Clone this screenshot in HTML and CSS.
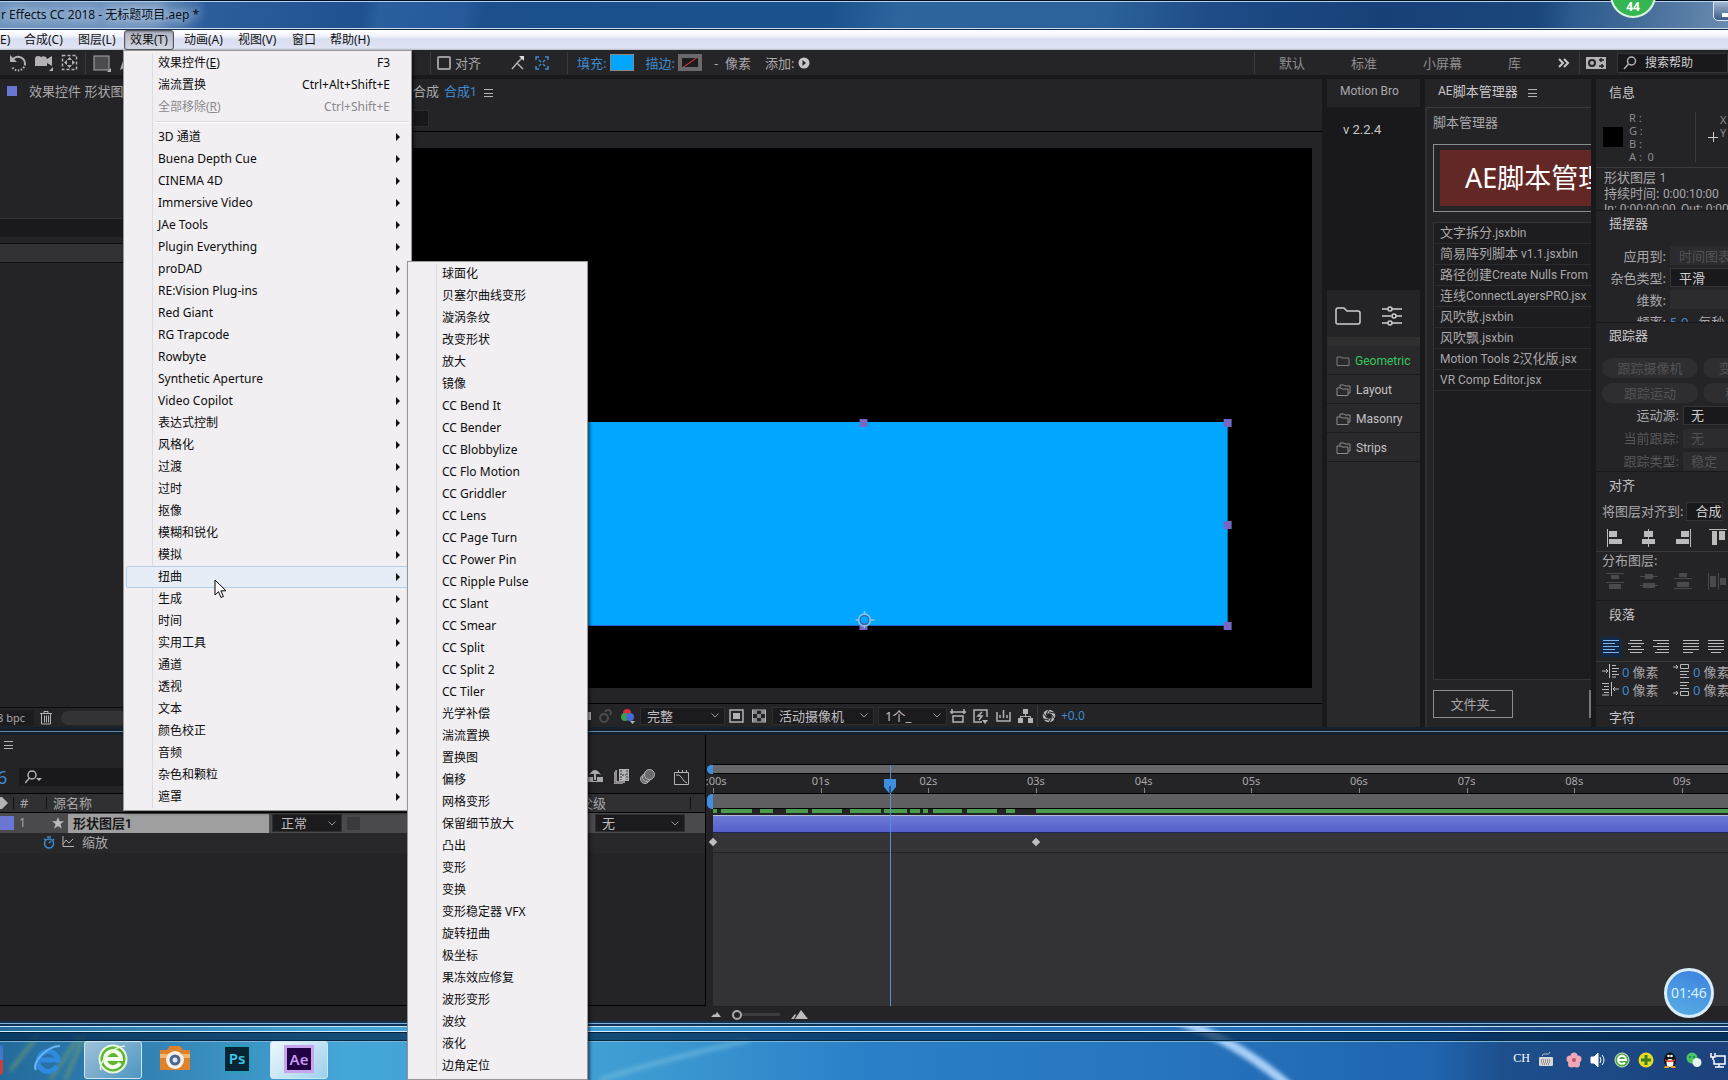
FILE: index.html
```html
<!DOCTYPE html>
<html lang="zh-CN">
<head>
<meta charset="utf-8">
<title>Adobe After Effects CC 2018 - 无标题项目.aep *</title>
<link rel="stylesheet" href="styles.css">
</head>
<body>
<div class="desktop">
<header class="titlebar">
  <h1 class="title-text">r Effects CC 2018 - 无标题项目.aep *</h1>
  <div class="score">44</div>
  <button class="minimize" aria-label="最小化"><span class="min-bar"></span></button>
</header>

<nav class="menubar">
  <button class="menu-head first">E)</button>
  <button class="menu-head">合成(C)</button>
  <button class="menu-head">图层(L)</button>
  <div class="menu-anchor">
    <button class="menu-head open">效果(T)</button>
    <div class="menu effects">
      <button class="mi">效果控件(<u>E</u>)<span class="key">F3</span></button>
      <button class="mi">湍流置换<span class="key">Ctrl+Alt+Shift+E</span></button>
      <button class="mi off" disabled>全部移除(<u>R</u>)<span class="key">Ctrl+Shift+E</span></button>
      <hr class="sep">
      <button class="mi sub">3D 通道</button>
      <button class="mi sub">Buena Depth Cue</button>
      <button class="mi sub">CINEMA 4D</button>
      <button class="mi sub">Immersive Video</button>
      <button class="mi sub">JAe Tools</button>
      <button class="mi sub">Plugin Everything</button>
      <button class="mi sub">proDAD</button>
      <button class="mi sub">RE:Vision Plug-ins</button>
      <button class="mi sub">Red Giant</button>
      <button class="mi sub">RG Trapcode</button>
      <button class="mi sub">Rowbyte</button>
      <button class="mi sub">Synthetic Aperture</button>
      <button class="mi sub">Video Copilot</button>
      <button class="mi sub">表达式控制</button>
      <button class="mi sub">风格化</button>
      <button class="mi sub">过渡</button>
      <button class="mi sub">过时</button>
      <button class="mi sub">抠像</button>
      <button class="mi sub">模糊和锐化</button>
      <button class="mi sub">模拟</button>
      <button class="mi sub hot">扭曲</button>
      <button class="mi sub">生成</button>
      <button class="mi sub">时间</button>
      <button class="mi sub">实用工具</button>
      <button class="mi sub">通道</button>
      <button class="mi sub">透视</button>
      <button class="mi sub">文本</button>
      <button class="mi sub">颜色校正</button>
      <button class="mi sub">音频</button>
      <button class="mi sub">杂色和颗粒</button>
      <button class="mi sub">遮罩</button>
      <div class="menu distort">
        <button class="mi">球面化</button>
        <button class="mi">贝塞尔曲线变形</button>
        <button class="mi">漩涡条纹</button>
        <button class="mi">改变形状</button>
        <button class="mi">放大</button>
        <button class="mi">镜像</button>
        <button class="mi">CC Bend It</button>
        <button class="mi">CC Bender</button>
        <button class="mi">CC Blobbylize</button>
        <button class="mi">CC Flo Motion</button>
        <button class="mi">CC Griddler</button>
        <button class="mi">CC Lens</button>
        <button class="mi">CC Page Turn</button>
        <button class="mi">CC Power Pin</button>
        <button class="mi">CC Ripple Pulse</button>
        <button class="mi">CC Slant</button>
        <button class="mi">CC Smear</button>
        <button class="mi">CC Split</button>
        <button class="mi">CC Split 2</button>
        <button class="mi">CC Tiler</button>
        <button class="mi">光学补偿</button>
        <button class="mi">湍流置换</button>
        <button class="mi">置换图</button>
        <button class="mi">偏移</button>
        <button class="mi">网格变形</button>
        <button class="mi">保留细节放大</button>
        <button class="mi">凸出</button>
        <button class="mi">变形</button>
        <button class="mi">变换</button>
        <button class="mi">变形稳定器 VFX</button>
        <button class="mi">旋转扭曲</button>
        <button class="mi">极坐标</button>
        <button class="mi">果冻效应修复</button>
        <button class="mi">波形变形</button>
        <button class="mi">波纹</button>
        <button class="mi">液化</button>
        <button class="mi">边角定位</button>
      </div>
      <svg class="cursor" width="13" height="20" viewBox="0 0 13 20"><path d="M1 1v15l3.500-3.300 2.500 5.800 2.400-1-2.500-5.700H12z" fill="#fff" stroke="#000"/></svg>
    </div>
  </div>
  <button class="menu-head">动画(A)</button>
  <button class="menu-head">视图(V)</button>
  <button class="menu-head">窗口</button>
  <button class="menu-head">帮助(H)</button>
</nav>

<div class="toolbar">
  <div class="tools">
    <svg width="18" height="18" viewBox="0 0 18 18" fill="none" stroke="#b4b2b4" stroke-width="2"><path d="M4 5a7 7 0 0 1 12 5"/><path d="M16 10a7 7 0 0 1-13 3" stroke-dasharray="1.500 1.500"/><path d="M1 1v7h7z" fill="#b4b2b4" stroke="none"/></svg>
    <svg width="20" height="18" viewBox="0 0 20 18" fill="#b4b2b4"><path d="M1 5q0-3 3-3 2 0 3 1 5-2 6 2l5-3v10l-5-3v3H1z"/><path d="M19 13v4h-4z"/></svg>
    <svg width="17" height="17" viewBox="0 0 17 17" fill="none" stroke="#b4b2b4"><rect x="1.500" y="1.500" width="14" height="14" stroke-width="1.500" stroke-dasharray="3 2"/><path d="M8.500 3 11 6H6zM8.500 14 6 11h5zM3 8.500 6 6v5zM14 8.500 11 6v5z" fill="#b4b2b4" stroke="none"/></svg>
    <i class="vr"></i>
    <svg width="19" height="18" viewBox="0 0 19 18"><rect x="1" y="2" width="15" height="14" fill="#4c4b4d" stroke="#aaa"/><path d="M18 14v4h-4z" fill="#b4b2b4"/></svg>
    <svg width="14" height="18" viewBox="0 0 14 18" fill="#b4b2b4"><path d="M1 16 4 7l5-5 4 4-4 6z"/></svg>
  </div>
  <div class="shape-options">
    <i class="vr"></i>
    <label class="snap"><input type="checkbox" class="check">对齐</label>
    <svg width="14" height="16" viewBox="0 0 14 16" fill="none" stroke="#b4b2b4"><path d="M1 14l5-6 6 6M6 8l5-5" stroke-width="1.500"/><path d="M8 1h5v5z" fill="#ddd" stroke="none"/></svg>
    <svg class="mark" width="14" height="14" viewBox="0 0 14 14" fill="none" stroke="#3e8ad0"><path d="M1 4V1h3M10 1h3v3M13 10v3h-3M4 13H1v-3M4 4l2 2M10 4 8 6M4 10l2-2M10 10 8 8" stroke-width="1.500"/></svg>
    <i class="vr"></i>
    <span class="blue">填充:</span><button class="swatch fill" aria-label="填充颜色"></button>
    <span class="blue">描边:</span><button class="swatch stroke" aria-label="描边颜色"></button>
    <span class="px">- &nbsp;像素</span><span>添加:</span>
    <svg width="12" height="14" viewBox="0 0 12 14"><circle cx="6" cy="7" r="5.500" fill="#c8c6c8"/><path d="M4.500 4v6L8 7z" fill="#222"/></svg>
  </div>
  <div class="spaces">
    <i class="vr"></i>
    <button class="space">默认</button><button class="space">标准</button><button class="space">小屏幕</button><button class="space">库</button>
    <svg width="12" height="10" viewBox="0 0 12 10" fill="none" stroke="#c8c6c8" stroke-width="2"><path d="M1 1l4 4-4 4M6 1l4 4-4 4"/></svg>
    <i class="vr"></i>
    <svg width="20" height="12" viewBox="0 0 20 12"><path d="M0 0h20v12H0z" fill="#b4b2b4"/><circle cx="6" cy="6" r="3" fill="none" stroke="#222" stroke-width="2"/><path d="M13 3h5M13 9h5M15 1v4M16 7v4" stroke="#222" stroke-width="1.500"/></svg>
    <label class="help"><svg width="14" height="14" viewBox="0 0 14 14" fill="none" stroke="#b4b2b4" stroke-width="1.500"><circle cx="8.500" cy="5" r="4"/><path d="M5.500 8 1 13"/></svg><input type="text" placeholder="搜索帮助" aria-label="搜索帮助"></label>
  </div>
</div>

<main class="workspace">
  <section class="panel project">
    <div class="tab"><i class="chip"></i>效果控件 形状图层 1</div>
    <div class="fx-body"><div class="band-dark"></div><div class="band-light"></div></div>
    <div class="project-foot"><span class="bpc">8 bpc</span>
      <svg width="12" height="14" viewBox="0 0 12 14" fill="none" stroke="#b4b2b4"><path d="M0 2.500h12M4 2V.500h4V2M1.500 3v10h9V3M4.500 4.500v7M6.500 4.500v7M8.500 4.500v7"/></svg><i class="scroll"></i></div>
  </section>

  <section class="panel comp">
    <div class="tab comp-tab">合成 <span class="blue">合成<span class="lat">1</span></span><i class="burger"></i></div>
    <div class="crumbs"><i class="crumb"></i></div>
    <div class="viewer">
      <svg class="canvas" viewBox="0 0 906 540" preserveAspectRatio="none">
        <rect width="906" height="540" fill="#000"/>
        <rect x="87" y="274" width="734" height="204" fill="#00a6ff"/>
        <path d="M87 477.500h734" stroke="#2a62c4"/>
        <g fill="#7468c4"><path d="M450 271h8v8h-8zM817 271h8v8h-8zM817 373h8v8h-8zM817 474h8v8h-8zM450 475h8v7h-8z"/></g>
        <g fill="none" stroke="#8fc4e4" stroke-width="1.500"><circle cx="455" cy="472" r="4.500" stroke="#2f6aa4"/><circle cx="455" cy="472" r="6"/><path d="M455 463v4M455 477v3M446 472h4M460 472h5"/></g>
      </svg>
    </div>
    <div class="comp-foot">
      <i class="cam-end"></i>
      <svg width="14" height="16" viewBox="0 0 14 16" fill="none" stroke="#4c4b4e" stroke-width="2"><circle cx="5" cy="10" r="4"/><path d="M6 4c3-4 8-1 5 3"/></svg>
      <svg width="16" height="16" viewBox="0 0 16 16"><circle cx="7" cy="5" r="4" fill="#d8303a"/><circle cx="5" cy="9" r="4" fill="#3c9c4c"/><circle cx="10" cy="9" r="4" fill="#456ad8"/><path d="M10 13h5l-2.500 3z" fill="#bbb"/></svg>
      <select class="drop w85" aria-label="分辨率"><option>完整</option></select>
      <svg width="16" height="14" viewBox="0 0 16 14"><rect x="1" y="1" width="13" height="12" fill="none" stroke="#b4b2b4" stroke-width="1.500"/><rect x="4" y="4" width="7" height="6" fill="#b4b2b4"/></svg>
      <svg width="15" height="14" viewBox="0 0 15 14"><rect x=".5" y="1" width="13" height="12" fill="none" stroke="#b4b2b4"/><path d="M1 1h4v4H1zM9 1h4v4H9zM5 5h4v4H5zM1 9h4v4H1zM9 9h4v4H9z" fill="#8a898b"/></svg>
      <select class="drop w102" aria-label="摄像机"><option>活动摄像机</option></select>
      <select class="drop w69" aria-label="视图布局"><option>1个_</option></select>
      <svg width="16" height="14" viewBox="0 0 16 14" fill="none" stroke="#b4b2b4" stroke-width="1.500"><path d="M0 3h16M2 0v5M14 0v5M3 7h10v6H3z"/></svg>
      <svg width="16" height="16" viewBox="0 0 16 16" fill="none" stroke="#b4b2b4" stroke-width="1.500"><path d="M14 9V2H1v12h8M9 4 5 8h4l-3 4"/><path d="M9 12h6l-3 4z" fill="#b4b2b4" stroke="none"/></svg>
      <svg width="15" height="14" viewBox="0 0 15 14" fill="none" stroke="#b4b2b4" stroke-width="1.500"><path d="M1 3v9h13V3M4 6v3M7.500 1v8M11 6v3"/></svg>
      <svg width="15" height="14" viewBox="0 0 15 14" fill="#b4b2b4"><path d="M5 0h5v5H5zM0 9h5v5H0zM10 9h5v5h-5zM7 5h1v2h5v2h-1V8H3v1H2V7h5z"/></svg>
      <i class="vr"></i>
      <svg width="14" height="14" viewBox="0 0 14 14" fill="none" stroke="#b4b2b4"><circle cx="7" cy="7" r="4.500" stroke-width="3.500"/><path d="M7 0 4 6M13 4 7 3M13 10 9 5M7 14l3-6M1 10l6 1M1 4l4 5" stroke="#232325"/></svg>
      <span class="blue num">+0.0</span>
    </div>
  </section>

  <section class="panel motion">
    <div class="tab">Motion Bro</div>
    <div class="version">v 2.2.4</div>
    <div class="motion-tools">
      <svg width="26" height="20" viewBox="0 0 26 20" fill="none" stroke="#d0ced0" stroke-width="1.500"><path d="M1 17V4q0-2 2-2h6l3 3h11q2 0 2 2v9q0 2-2 2H3q-2 0-2-1z"/></svg>
      <svg width="20" height="20" viewBox="0 0 20 20" fill="none" stroke="#d0ced0" stroke-width="1.500"><path d="M0 3h6M10 3h10M0 10h9M14 10h6M0 17h6M10 17h10"/><circle cx="8" cy="3" r="2"/><circle cx="12" cy="10" r="2"/><circle cx="8" cy="17" r="2"/></svg>
    </div>
    <div class="folders">
      <button class="folder on"><svg width="14" height="12" viewBox="0 0 14 12" fill="none" stroke="#7c7b7e"><path d="M1 10V2h4l1 1h7v7.500H1z"/></svg>Geometric</button>
      <button class="folder"><svg width="15" height="12" viewBox="0 0 15 12" fill="none" stroke="#8c8b8e"><path d="M1 11V4h4l1 1h6v6.500H1zM4 4V1h4l1 1h5v7h-2"/></svg>Layout</button>
      <button class="folder"><svg width="15" height="12" viewBox="0 0 15 12" fill="none" stroke="#8c8b8e"><path d="M1 11V4h4l1 1h6v6.500H1zM4 4V1h4l1 1h5v7h-2"/></svg>Masonry</button>
      <button class="folder"><svg width="15" height="12" viewBox="0 0 15 12" fill="none" stroke="#8c8b8e"><path d="M1 11V4h4l1 1h6v6.500H1zM4 4V1h4l1 1h5v7h-2"/></svg>Strips</button>
    </div>
  </section>

  <section class="panel scripts">
    <div class="tab bright"><span class="lat">AE</span>脚本管理器<i class="burger"></i></div>
    <div class="scripts-body">
      <div class="script-title">脚本管理器</div>
      <div class="banner"><span>AE脚本管理器</span></div>
      <ul class="files">
        <li>文字拆分<span class="lat">.jsxbin</span></li>
        <li>简易阵列脚本<span class="lat"> v1.1.jsxbin</span></li>
        <li>路径创建<span class="lat">Create Nulls From Paths.jsx</span></li>
        <li>连线<span class="lat">ConnectLayersPRO.jsx</span></li>
        <li>风吹散<span class="lat">.jsxbin</span></li>
        <li>风吹飘<span class="lat">.jsxbin</span></li>
        <li><span class="lat">Motion Tools 2</span>汉化版<span class="lat">.jsx</span></li>
        <li><span class="lat">VR Comp Editor.jsx</span></li>
      </ul>
      <div class="script-foot"><button class="folder-btn">文件夹_</button><i class="next-btn"></i></div>
    </div>
  </section>

  <aside class="side">
    <section class="panel info">
      <div class="tab bright">信息</div>
      <div class="info-row"><i class="black"></i><div class="rgba"><span>R :</span><span>G :</span><span>B :</span><span>A : &nbsp;0</span></div>
        <i class="vline"></i><svg width="10" height="10" viewBox="0 0 10 10" stroke="#ccc"><path d="M0 5.500h10M5.500 0v10"/></svg><div class="xy"><span>X</span><span>Y</span></div></div>
      <div class="info-text"><div>形状图层 <span class="lat">1</span></div><div>持续时间: <span class="lat">0:00:10:00</span></div><div class="lat cut">In: 0:00:00:00, Out: 0:00:09:24</div></div>
    </section>
    <section class="panel wiggler">
      <div class="tab bright">摇摆器</div>
      <div class="form f1">
        <label for="w1">应用到:</label><select id="w1" class="box dim" disabled><option>时间图表</option></select>
        <label for="w2">杂色类型:</label><select id="w2" class="box"><option>平滑</option></select>
        <label for="w3">维数:</label><select id="w3" class="box dim" disabled><option></option></select>
        <label>频率:</label><span class="freq"><b>5.0</b> &nbsp; 每秒</span>
      </div>
    </section>
    <section class="panel tracker">
      <div class="tab bright">跟踪器</div>
      <div class="pills"><button disabled>跟踪摄像机</button><button disabled>变形稳定器</button><button disabled>跟踪运动</button><button disabled>稳定运动</button></div>
      <div class="form f2">
        <label for="t1">运动源:</label><select id="t1" class="box"><option>无</option></select>
        <label class="off" for="t2">当前跟踪:</label><select id="t2" class="box dim" disabled><option>无</option></select>
        <label class="off" for="t3">跟踪类型:</label><select id="t3" class="box dim" disabled><option>稳定</option></select>
      </div>
    </section>
    <section class="panel align">
      <div class="tab bright">对齐</div>
      <div class="align-to"><label for="a1">将图层对齐到:</label><select id="a1" class="box"><option>合成</option></select></div>
      <div class="icons lit">
        <svg width="16" height="18" viewBox="0 0 16 18" fill="#bbb"><path d="M0 0h1v18H0zM2 2h8v6H2zM2 10h13v5H2z"/></svg>
        <svg width="16" height="18" viewBox="0 0 16 18" fill="#bbb"><path d="M7 0h1v18H7zM3 2h9v6H3zM1 10h13v5H1z"/></svg>
        <svg width="16" height="18" viewBox="0 0 16 18" fill="#bbb"><path d="M15 0h1v18h-1zM6 2h8v6H6zM1 10h13v5H1z"/></svg>
        <svg width="18" height="18" viewBox="0 0 18 18" fill="#bbb"><path d="M0 0h18v1H0zM3 2h5v14H3zM10 2h6v9h-6z"/></svg>
      </div>
      <div class="dist">分布图层:</div>
      <div class="icons dark">
        <svg width="18" height="17" viewBox="0 0 18 17" fill="#4a494c"><path d="M0 0h18v1H0zM5 2h8v4H5zM0 9h18v1H0zM3 11h12v5H3z"/></svg>
        <svg width="18" height="17" viewBox="0 0 18 17" fill="#4a494c"><path d="M0 3h18v1H0zM5 1h8v5H5zM0 12h18v1H0zM3 10h12v5H3z"/></svg>
        <svg width="18" height="17" viewBox="0 0 18 17" fill="#4a494c"><path d="M0 5h18v1H0zM5 0h8v4H5zM0 15h18v1H0zM3 9h12v5H3z"/></svg>
        <svg width="18" height="17" viewBox="0 0 18 17" fill="#4a494c"><path d="M0 0h1v17H0zM2 3h6v11H2zM10 0h1v17h-1zM12 5h6v7h-6z"/></svg>
      </div>
    </section>
    <section class="panel para">
      <div class="tab bright">段落</div>
      <div class="para-icons">
        <button class="on" aria-label="左对齐"><svg width="16" height="14" viewBox="0 0 16 14" stroke="#7fb4ea"><path d="M0 .5h16M0 3.500h12M0 6.500h16M0 9.500h12M0 12.500h16"/></svg></button>
        <button aria-label="居中"><svg width="16" height="14" viewBox="0 0 16 14" stroke="#bbb"><path d="M2 .5h12M0 3.500h16M3 6.500h10M0 9.500h16M2 12.500h12"/></svg></button>
        <button aria-label="右对齐"><svg width="16" height="14" viewBox="0 0 16 14" stroke="#bbb"><path d="M0 .5h16M4 3.500h12M0 6.500h16M4 9.500h12M2 12.500h14"/></svg></button>
        <button aria-label="末行左"><svg width="16" height="14" viewBox="0 0 16 14" stroke="#bbb"><path d="M0 .5h16M0 3.500h16M0 6.500h16M0 9.500h16M0 12.500h10"/></svg></button>
        <button aria-label="末行中"><svg width="16" height="14" viewBox="0 0 16 14" stroke="#bbb"><path d="M0 .5h16M0 3.500h16M0 6.500h16M0 9.500h16M3 12.500h10"/></svg></button>
      </div>
      <div class="indents">
        <span><svg width="17" height="14" viewBox="0 0 17 14" fill="none" stroke="#bbb"><path d="M0 7h6M4 5l2 2-2 2M7.500 0v14M10 1.500h4M10 4.500h7M10 7.500h5M10 10.500h7M10 13h4"/></svg><b>0</b>像素</span>
        <span><svg width="17" height="14" viewBox="0 0 17 14" fill="none" stroke="#bbb"><path d="M0 3h5M3 1l2 2-2 2M7.500.5h8v4h-8zM7 7.500h9M7 10.500h7M7 13.500h9"/></svg><b>0</b>像素</span>
        <span><svg width="17" height="14" viewBox="0 0 17 14" fill="none" stroke="#bbb"><path d="M0 1.500h7M2 4.500h5M0 7.500h7M2 10.500h5M0 13h7M9.500 0v14M17 7h-6M13 5l-2 2 2 2"/></svg><b>0</b>像素</span>
        <span><svg width="17" height="14" viewBox="0 0 17 14" fill="none" stroke="#bbb"><path d="M0 11h5M3 9l2 2-2 2M7.500 9.500h8v4h-8zM7 .5h9M7 3.500h7M7 6.500h9"/></svg><b>0</b>像素</span>
      </div>
    </section>
    <section class="panel char"><div class="tab bright">字符</div></section>
  </aside>
</main>

<section class="timeline">
  <div class="tl-left">
    <div class="tl-tabs"><i class="burger"></i></div>
    <div class="tl-search"><span class="time">6</span>
      <label class="layer-search"><svg width="20" height="14" viewBox="0 0 20 14" fill="none" stroke="#b4b2b4" stroke-width="1.500"><circle cx="7" cy="5" r="4"/><path d="M4.500 8 0 13"/><path d="M11 8h6l-3 3z" fill="#b4b2b4" stroke="none"/></svg><input type="text" aria-label="搜索图层"></label>
      <div class="switches">
        <svg width="15" height="15" viewBox="0 0 15 15" fill="#a9a8aa"><path d="M1 6q6-10 12 0l-2-1H8v6H6V5H3z"/><path d="M0 8h5v5H0zM9 8h6v5H9zM5 12h4v1H5z"/></svg>
        <svg width="15" height="15" viewBox="0 0 15 15"><path d="M5 0h10v12H5z" fill="#b4b2b4"/><path d="M3 2H2v11h9M1 4H0v11h9" stroke="#b4b2b4" fill="none" stroke-width="1.500"/><path d="M7 1v10M13 1v10M8 6h4" stroke="#333" stroke-dasharray="2 1"/></svg>
        <svg width="15" height="15" viewBox="0 0 15 15" fill="#6a696b" stroke="#b4b2b4"><circle cx="5" cy="10" r="4.500"/><circle cx="7" cy="8" r="4.500"/><circle cx="9.500" cy="5.500" r="5"/></svg>
        <svg width="17" height="16" viewBox="0 0 17 16" fill="none" stroke="#b4b2b4"><path d="M1.500 3.500h14v12h-14zM5.500 1v2M9.500 1v2M13.500 1v2"/><path d="M3 6q4-1 6 3t5 5"/></svg>
      </div>
    </div>
    <div class="tl-head"><svg width="8" height="12" viewBox="0 0 8 12"><path d="M0 0h2l6 6-6 6H0z" fill="#b4b2b4"/></svg><i class="hv"></i><span class="hash">#</span><i class="hv"></i><span>源名称</span><span class="parent">父级</span><i class="hv last"></i></div>
    <div class="layer"><i class="label-chip"></i><span class="idx">1</span>
      <svg width="12" height="12" viewBox="0 0 12 12"><path d="M6 0l1.600 4.200H12L8.500 7l1.300 4.700L6 9 2.200 11.700 3.500 7 0 4.200h4.400z" fill="#bbb"/></svg>
      <span class="layer-name">形状图层<span class="lat">1</span></span>
      <select class="drop w70" aria-label="混合模式"><option>正常</option></select><i class="matte"></i>
      <select class="drop w90" aria-label="父级"><option>无</option></select></div>
    <div class="prop"><svg width="12" height="13" viewBox="0 0 12 13" fill="none" stroke="#3e8ad0" stroke-width="1.500"><circle cx="6" cy="7.500" r="4.500"/><path d="M6 7l2-2M4 1h4M1 3l2 1M11 3 9.500 4.500"/></svg><svg width="12" height="12" viewBox="0 0 12 12" fill="none" stroke="#b4b2b4"><path d="M1 0v10.500h11M1 8l3-4 3 3 4-4"/></svg><span>缩放</span></div>
    <div class="tl-fill"></div>
  </div>
  <div class="tl-right">
    <div class="tl-space"></div>
    <div class="navbar"></div>
    <div class="ruler"><span>0:00s</span><span>01s</span><span>02s</span><span>03s</span><span>04s</span><span>05s</span><span>06s</span><span>07s</span><span>08s</span><span>09s</span></div>
    <div class="workarea"></div>
    <svg class="cache" viewBox="0 0 1015 4" preserveAspectRatio="none"><path fill="#4c9c50" d="M0 0h1015v4H0z"/><path fill="#242325" d="M4 0h4v4h-4zM39 0h8v4h-8zM60 0h13v4H60zM95 0h4v4h-4zM129 0h8v4h-8zM168 0h3v4h-3zM194 0h3v4h-3zM207 0h3v4h-3zM215 0h5v4h-5zM249 0h5v4h-5zM284 0h9v4h-9zM302 0h21v4h-21z"/></svg>
    <div class="bar"></div>
    <div class="keys"><i class="kf k0"></i><i class="kf k3"></i></div>
    <div class="tl-fill"></div>
    <i class="brk top"></i><i class="brk low"></i>
    <div class="playhead"><svg width="12" height="14" viewBox="0 0 12 14"><path d="M0 0h12v8l-5 6H5L0 8z" fill="#3f8fe0"/><path d="M6 7v7" stroke="#123"/></svg></div>
  </div>
  <div class="tl-foot"><svg width="10" height="5" viewBox="0 0 10 5" fill="#bbb"><path d="M0 5l3-3 1 1 2-3 4 5z"/></svg><input type="range" min="0" max="100" value="0" aria-label="时间缩放"><svg width="17" height="9" viewBox="0 0 17 9" fill="#bbb"><path d="M0 9l4-5 1 1-2 4zM4 9l6-9 7 9z"/></svg></div>
</section>

<footer class="taskbar">
  <svg class="wall" viewBox="0 0 1728 59" preserveAspectRatio="none">
    <defs><linearGradient id="sky"><stop offset="0" stop-color="#236a9c"/><stop offset=".1" stop-color="#3587b8"/><stop offset=".2" stop-color="#45a6d8"/><stop offset=".36" stop-color="#3f9dd2"/><stop offset=".5" stop-color="#2a80c8"/><stop offset=".68" stop-color="#2674bd"/><stop offset=".83" stop-color="#2064ae"/><stop offset=".87" stop-color="#1d4f8c"/><stop offset="1" stop-color="#1c427c"/></linearGradient>
    <filter id="soft" x="-50%" y="-50%" width="200%" height="200%"><feGaussianBlur stdDeviation="2"/></filter></defs>
    <rect width="1728" height="59" fill="url(#sky)"/>
    <path d="M1180 0q60 22 110 66" stroke="#a8d0f8" stroke-width="9" fill="none" filter="url(#soft)"/>
    <path d="M80 14 50 59M85 14 65 59M38 14 10 50" stroke="#8fae5a" stroke-width="3" fill="none" opacity=".6" filter="url(#soft)"/>
    <path d="M600 59q60-20 150-40" stroke="#8fd0e8" stroke-width="5" fill="none" opacity=".4" filter="url(#soft)"/>
  </svg>
  <div class="edge"></div>
  <div class="apps">
    <i class="red"></i>
    <button class="app ie" aria-label="Internet Explorer"><svg width="30" height="32" viewBox="0 0 30 32" fill="none"><path d="M24 23a10 10 0 1 1 1-6H8" stroke="#2f8ae0" stroke-width="5"/><path d="M3 27C-2 20 14 3 27 3" stroke="#6bb6f0" stroke-width="2"/></svg></button>
    <button class="app on" aria-label="浏览器"><svg width="30" height="32" viewBox="0 0 30 32" fill="none"><circle cx="15" cy="16" r="13.500" fill="#62b52e" stroke="#e8f8e0" stroke-width="2"/><path d="M22 20a8 8 0 1 1 1-4H9" stroke="#f4fff0" stroke-width="4"/><path d="M3 27C0 20 14 4 27 3" stroke="#e4f8d8" stroke-width="1.500"/></svg></button>
    <button class="app" aria-label="相机"><svg width="32" height="30" viewBox="0 0 32 30"><path d="M1 6h7l3-4h10l3 4h7v20H1z" fill="#e0822c"/><path d="M1 10h30v4H1z" fill="#f6b56c"/><circle cx="16" cy="16" r="9" fill="#f4efe8"/><circle cx="16" cy="16" r="5.500" fill="#48678c"/><circle cx="16" cy="16" r="2.500" fill="#dce8f4"/></svg></button>
    <button class="app"><span class="ps">Ps</span></button>
    <button class="app on ae-on"><span class="ae">Ae</span></button>
  </div>
  <div class="tray">
    <span class="ch">CH</span>
    <svg width="16" height="15" viewBox="0 0 16 15"><path d="M4 4q1-3 4-2t4-2" stroke="#bbb" fill="none"/><rect x="1" y="5" width="14" height="9" rx="1" fill="#d8d8d8"/><path d="M3 8h10M3 10h10M4 12h8" stroke="#555" stroke-dasharray="1 1"/></svg>
    <svg class="flower" width="16" height="16" viewBox="0 0 16 16" fill="#f0a8b8"><circle cx="8" cy="4" r="3.500"/><circle cx="12" cy="7" r="3.500"/><circle cx="10.500" cy="12" r="3.500"/><circle cx="5.500" cy="12" r="3.500"/><circle cx="4" cy="7" r="3.500"/><circle cx="8" cy="8" r="2" fill="#c0506c"/></svg>
    <svg width="16" height="16" viewBox="0 0 16 16" fill="none" stroke="#fff"><path d="M1 5h3l4-4v14l-4-4H1z" fill="#fff"/><path d="M10 5q2 3 0 6M12 3q4 5 0 10"/></svg>
    <svg width="16" height="16" viewBox="0 0 16 16" fill="none"><circle cx="8" cy="8" r="7" fill="#4ca83c" stroke="#cfe8c8"/><path d="M11 10.500a4 4 0 1 1 1-2.500H5" stroke="#fff" stroke-width="2"/></svg>
    <svg width="16" height="16" viewBox="0 0 16 16"><circle cx="8" cy="8" r="7.500" fill="#e4dc24"/><path d="M8 3v10M3 8h10" stroke="#3c7c20" stroke-width="3"/></svg>
    <svg width="16" height="16" viewBox="0 0 16 16"><ellipse cx="8" cy="8" rx="6" ry="7.500" fill="#111"/><ellipse cx="8" cy="11" rx="3.500" ry="4" fill="#fff"/><circle cx="6.500" cy="4" r="1.300" fill="#fff"/><circle cx="9.500" cy="4" r="1.300" fill="#fff"/><path d="M3 7q5 3 10 0v2q-5 2-10 0z" fill="#d83020"/><path d="M3 14h4v2H2zM9 14h4l1 2H9z" fill="#e8a020"/></svg>
    <svg width="16" height="16" viewBox="0 0 16 16"><circle cx="6" cy="6" r="5.500" fill="#4cc464"/><circle cx="11" cy="10.500" r="4.500" fill="#e8f4ec"/><circle cx="4" cy="5" r="1" fill="#175"/><circle cx="8" cy="5" r="1" fill="#175"/></svg>
    <svg width="16" height="16" viewBox="0 0 16 16" fill="none" stroke="#fff" stroke-width="1.500"><path d="M6 4h9v8H4V8M5 15h9M9 12v3M1 1v4h4V1M3 5v3"/></svg>
  </div>
</footer>
<div class="clock">01:46</div>
</div>
</body>
</html>
```
FILE: styles.css
```css
* { box-sizing: border-box; }
html, body { margin: 0; height: 100%; }
body { background: #1c1b1d; font: 13px/16px "Noto Sans", "Noto Sans CJK SC", sans-serif; color: #a9a8aa; overflow: hidden; }
button, select, input { font: inherit; color: inherit; border: 0; margin: 0; padding: 0; background: none; border-radius: 0; }
button { text-align: left; white-space: nowrap; }
i, svg { display: block; flex: none; }
b { font-weight: 400; color: #3e8ad0; }
ul { list-style: none; margin: 0; padding: 0; }
.lat { font-family: Roboto, "Noto Sans", sans-serif; font-size: 12px; }
.blue { color: #3e8ad0; }
.desktop { position: relative; height: 100vh; display: grid; grid-template-rows: 30px 20px 29px minmax(0, 1fr) 294px 59px; grid-template-columns: minmax(0, 1fr); overflow: hidden; }

/* title bar */
.titlebar { position: relative; border-top: 1px solid #021024; border-bottom: 1px solid #10294a; box-shadow: inset 0 1px #b8cfe8, inset 0 -1px #c8dcf0; background: linear-gradient(100deg, #6e93bd 0, #6e93bd 9%, #2d5e9c 12%, #1f5090 21%, #2b5f9e 22%, #27599a 27%, #1c4f8c 28%, #1b528d 48%, #2f659d 52%, #2c619a 64%, #1e4c86 70%, #174078 80%, #1b477c 89%, #2c5c90 91%, #3f6896 94%, #6a8cb0 100%); }
.title-text { margin: 0; padding-left: 1px; font-size: 12px; line-height: 28px; font-weight: 400; color: #06101c; text-shadow: 0 0 8px #dce8f4, 0 0 12px #c8d8ea; }
.score { position: absolute; right: 72px; top: -29px; width: 46px; height: 46px; border: 2px solid #d8f4dc; border-radius: 50%; background: #35b653; color: #fff; font-weight: 700; font-size: 12px; line-height: 66px; text-align: center; }
.minimize { position: absolute; right: -14px; top: 0; width: 29px; height: 20px; border: 1px solid #dce8f4; border-radius: 0 0 0 5px; background: linear-gradient(#a4b8d0, #3c5c88); }
.min-bar { display: block; margin: 8px 0 0 8px; width: 12px; height: 4px; background: #fff; }

/* menu bar */
.menubar { display: flex; background: linear-gradient(#fff 0, #f2f4fb 30%, #d9def1 45%, #dfe3f4 90%, #b8bac4); color: #111; font-size: 12px; }
.menu-head { width: 54px; padding: 0 7px; height: 20px; line-height: 20px; }
.menu-head.first { width: 17px; padding: 0 8px 0 0; }
.menu-head.open { width: 50px; border: 1px solid #55565e; border-radius: 3px; background: linear-gradient(#b0b4c0, #d4d8e4); line-height: 18px; padding: 0 5px; box-shadow: inset 0 1px 2px #7a7e8a; }
.menu-anchor { position: relative; margin: 0 3px 0 -1px; }
.menu-anchor + .menu-head + .menu-head + .menu-head { width: 38px; }
.menu { position: absolute; z-index: 5; border: 1px solid #979797; background: #f1eff2; box-shadow: 2px 2px 3px rgba(0, 0, 0, .5); padding: 1px 2px 2px; color: #0c0c0c; font-size: 12px; }
.menu::before { content: ""; position: absolute; left: 28px; top: 2px; bottom: 2px; width: 1px; background: #dddce0; }
.effects { top: 20px; left: -1px; width: 289px; }
.distort { top: 210px; left: 283px; width: 181px; }
.mi { position: relative; display: flex; align-items: center; width: 100%; height: 22px; line-height: 22px; padding: 0 18px 0 31px; border: 1px solid transparent; border-radius: 2px; }
.key { margin-left: auto; }
.off { color: #8a898c; }
.mi.sub { padding-right: 8px; }
.mi.sub::after { content: ""; margin-left: auto; border: 4px solid transparent; border-left-color: #111; border-right: 0; }
.mi.hot { border-color: #b4cfe8; background: #e6edf6; }
.sep { margin: 3px 0 3px 28px; border: 0; border-top: 1px solid #dcdbde; border-bottom: 1px solid #fff; }
.cursor { position: absolute; left: 90px; top: 528px; }

/* tool bar */
.toolbar { display: flex; border-bottom: 4px solid #19181a; background: #252426; }
.tools, .shape-options, .spaces { display: flex; align-items: center; }
.tools { width: 430px; padding-left: 9px; gap: 7px; }
.vr { width: 1px; height: 22px; background: #3a393b; }
.shape-options svg, .shape-options span { margin-left: 12px; }
.snap { display: flex; align-items: center; gap: 4px; margin: 0 18px 0 6px; }
.check { appearance: none; width: 14px; height: 14px; border: 2px solid #9a999b; border-radius: 2px; }
.shape-options svg.mark { margin-left: 10px; margin-right: 18px; }
.shape-options .vr + .blue { margin-left: 9px; }
.swatch { width: 24px; height: 17px; margin-left: 3px; border: 1px solid #88878a; }
.swatch.fill { background: #00a6ff; }
.swatch.stroke { border: 4px solid #6a696b; background: linear-gradient(145deg, #1c1b1d 45%, #c03038 48%, #c03038 52%, #1c1b1d 55%); }
.shape-options .px { margin-right: 2px; }
.shape-options span + svg { margin-left: 4px; }
.spaces { margin-left: auto; }
.spaces .space { margin-left: 24px; margin-right: 22px; color: #8f8e90; }
.spaces .space + svg { margin: 0 9px 0 15px; }
.spaces .vr + svg { margin: 0 11px 0 6px; }
.help { display: flex; align-items: center; width: 111px; height: 20px; padding-left: 5px; gap: 8px; border: 1px solid #353436; background: #19181a; color: #d0cfd1; overflow: hidden; font-size: 12px; }
.help input { flex: 1; min-width: 0; }
.help input::placeholder { color: #d0cfd1; opacity: 1; }

/* workspace */
.workspace { display: grid; grid-template-columns: 408px minmax(0, 1fr) 93px 166px 132px; column-gap: 5px; background: #19181a; min-height: 0; grid-template-rows: minmax(0, 1fr); }
.panel { background: #242326; min-width: 0; min-height: 0; overflow: hidden; display: flex; flex-direction: column; }
.tab { display: flex; align-items: center; height: 28px; padding: 0 0 4px 13px; white-space: nowrap; flex: none; }
.bright { color: #c8c7c9; }
.burger { width: 9px; height: 8px; margin: 4px 0 0 10px; border-top: 1px solid #b4b2b4; border-bottom: 1px solid #b4b2b4; background: linear-gradient(#b4b2b4, #b4b2b4) center / 100% 1px no-repeat; }
.project .tab { padding-left: 7px; }
.chip { width: 10px; height: 10px; margin-right: 12px; background: #6a76d4; }
.fx-body { flex: 1; padding-top: 111px; }
.band-dark { height: 19px; background: #1a191b; border-top: 1px solid #333; }
.band-light { height: 20px; margin-top: 6px; background: #313032; border-top: 1px solid #0c0c0c; border-bottom: 1px solid #0c0c0c; }
.project-foot { display: flex; align-items: center; height: 20px; border-top: 1px solid #0c0c0c; font-size: 11px; }
.bpc { width: 34px; background: #1c1b1d; margin-right: 6px; text-indent: -3px; }
.scroll { flex: 1; height: 14px; margin-left: 9px; background: #333234; border-radius: 7px; }
.comp .comp-tab { padding-left: 0; }
.comp-tab { gap: 5px; }
.comp-tab .burger { margin-left: 2px; }
.crumbs { height: 25px; border-bottom: 1px solid #000; padding-top: 3px; flex: none; }
.crumb { width: 16px; height: 17px; background: #171618; border: 1px solid #2c2b2d; }
.viewer { flex: 1; min-height: 0; padding: 16px 10px 15px 0; }
.canvas { width: 100%; height: 100%; }
.comp-foot { display: flex; align-items: center; height: 24px; border-top: 1px solid #000; padding-left: 175px; flex: none; white-space: nowrap; }
.cam-end { width: 3px; height: 8px; background: #b4b2b4; margin-right: 8px; }
.comp-foot svg + svg { margin-left: 7px; }
.drop { appearance: none; height: 18px; line-height: 16px; padding-left: 6px; background: #1b1a1c url("data:image/svg+xml,%3Csvg xmlns='http://www.w3.org/2000/svg' width='8' height='5'%3E%3Cpath d='M.5.5 4 4 7.500.5' fill='none' stroke='%23999'/%3E%3C/svg%3E") right 5px center no-repeat; border: 1px solid #2e2d2f; color: #c0bfc1; }
.w85 { width: 85px; margin: 0 4px; }
.w102 { width: 102px; margin: 0 4px 0 5px; }
.w69 { width: 69px; margin-right: 3px; }
.w70 { width: 70px; margin-left: 3px; }
.w90 { width: 90px; }
.comp-foot .vr { margin: 0 4px; }
.num { font-size: 12px; margin-left: 5px; }

/* motion bro */
.motion { font-family: Roboto, "Noto Sans", sans-serif; }
.motion .tab { font-size: 12px; }
.version { height: 183px; background: #19181a; padding: 15px 0 0 16px; font-size: 13px; color: #c8c7c9; flex: none; }
.motion-tools { display: flex; align-items: center; height: 47px; padding: 4px 0 0 8px; gap: 21px; flex: none; }
.folders { flex: 1; background: #29282b; border-top: 9px solid #2f2f30; }
.folder { display: flex; align-items: center; gap: 5px; width: 100%; height: 29px; padding: 2px 0 0 9px; border-bottom: 1px solid #1b1a1c; color: #c4c3c5; font-size: 12px; }
.folder.on { color: #36c95c; }

/* script manager */
.scripts-body { flex: 1; display: flex; flex-direction: column; border-top: 1px solid #3a393b; border-left: 2px solid #302f31; padding: 5px 0 0 6px; min-height: 0; }
.script-title { height: 31px; line-height: 18px; }
.banner { height: 68px; border: 1px solid #8c8b8d; border-right: 0; padding: 5px 0 5px 6px; margin-bottom: 10px; overflow: hidden; flex: none; }
.banner span { display: block; height: 56px; line-height: 56px; padding-left: 25px; background: #632726; color: #fff; font-size: 27px; white-space: nowrap; overflow: hidden; }
.files { flex: 1; background: #1d1c1e; border: 1px solid #343335; border-right: 0; }
.files li { height: 21px; line-height: 19px; padding-left: 6px; white-space: nowrap; overflow: hidden; border-bottom: 1px solid #2b2a2c; }
.script-foot { height: 47px; flex: none; display: flex; align-items: center; justify-content: space-between; }
.folder-btn { width: 80px; height: 28px; border: 1px solid #8c8b8d; text-align: center; }
.next-btn { width: 2px; height: 28px; background: #777; }

/* right column */
.side { display: grid; grid-template-rows: 131fr 111fr 149fr 128fr 104fr 21fr; row-gap: 1px; min-height: 0; }
.side .tab { height: 26px; padding-bottom: 1px; }
.info-row { display: flex; align-items: center; padding: 4px 0 0 7px; height: 64px; }
.black { width: 20px; height: 20px; background: #000; margin-right: 6px; }
.rgba, .xy { display: flex; flex-direction: column; font-size: 11px; line-height: 13px; white-space: nowrap; color: #8c8b8d; }
.rgba { width: 66px; }
.xy { align-self: flex-start; padding-top: 4px; }
.vline { width: 1px; height: 50px; background: #3a393b; margin-right: 12px; }
.info-row svg { margin-right: 2px; }
.info-text { margin-top: 1px; padding: 2px 0 0 8px; border-top: 1px solid #3a393b; line-height: 15px; white-space: nowrap; }
.cut { height: 8px; overflow: hidden; }
.form { display: grid; grid-auto-rows: 22px; align-items: center; white-space: nowrap; }
.form label { text-align: right; }
.f1 { grid-template-columns: 70px 90px; column-gap: 4px; padding-top: 8px; }
.f2 { grid-template-columns: 83px 90px; column-gap: 4px; grid-auto-rows: 23px; padding-top: 1px; }
.box { appearance: none; height: 19px; padding-left: 8px; border: 1px solid #343335; background: #19181a; color: #d0cfd1; opacity: 1; }
.box.dim { background: #2c2b2e; color: #535255; border-color: #2c2b2e; }
.f2 .box { padding-left: 7px; }
.form .off { color: #58575a; }
.pills { display: grid; grid-template-columns: 96px 96px; gap: 5px; padding: 9px 0 0 6px; }
.pills button { height: 20px; border-radius: 10px; background: #2e2d30; color: #535255; text-align: center; }
.align-to { display: flex; align-items: center; gap: 3px; height: 26px; padding-left: 6px; white-space: nowrap; }
.icons { display: flex; padding-left: 11px; gap: 18px; }
.lit { padding-top: 5px; height: 27px; }
.dist { border-top: 1px solid #3a393b; padding-left: 6px; height: 22px; }
.dark { gap: 16px; padding-left: 10px; }
.para-icons { display: flex; align-items: center; height: 34px; padding: 6px 0 0 5px; gap: 5px; }
.para-icons button { width: 20px; height: 20px; padding: 3px 2px; flex: none; }
.para-icons button:nth-child(4) { margin-left: 5px; }
.para-icons .on { background: #12294a; }
.indents { display: grid; grid-template-columns: 65px 70px; row-gap: 1px; padding: 2px 0 0 6px; border-top: 1px solid #3a393b; }
.indents span { display: flex; gap: 3px; height: 17px; white-space: nowrap; }
.indents span:nth-child(even) { padding-left: 6px; }
.char .tab { height: 22px; }

/* timeline */
.timeline { display: grid; grid-template-columns: 706px minmax(0, 1fr); grid-template-rows: minmax(0, 1fr) 15px; border-top: 8px solid #16202c; background: #242326; position: relative; }
.timeline::before { content: ""; position: absolute; left: 0; right: 0; top: -4px; height: 1px; background: #5f87a8; }
.tl-left, .tl-right { display: flex; flex-direction: column; position: relative; min-width: 0; overflow: hidden; }
.tl-left { border-right: 1px solid #000; border-bottom: 1px solid #000; }
.tl-tabs { height: 30px; }
.tl-tabs .burger { margin: 6px 0 0 4px; }
.tl-search { display: flex; align-items: center; height: 28px; padding-bottom: 5px; }
.time { width: 19px; font-size: 18px; color: #3e8ad0; text-indent: -3px; }
.layer-search { width: 500px; height: 18px; display: flex; align-items: center; background: #19181a; padding-left: 6px; }
.switches { display: flex; align-items: center; gap: 11px; margin-left: 69px; }
.switches svg:last-child { margin-left: 7px; }
.tl-head { display: flex; align-items: center; height: 20px; border-top: 1px solid #000; border-bottom: 1px solid #000; background: #302f31; white-space: nowrap; }
.hv { width: 1px; height: 12px; background: #111; margin: 0 6px 0 5px; }
.hash { width: 21px; }
.parent { margin-left: 488px; }
.tl-head .last { margin: 0 14px 0 auto; }
.layer { display: flex; align-items: center; height: 20px; background: #4a494b; }
.label-chip { width: 14px; height: 14px; background: #6a76d4; margin-right: 5px; }
.idx { width: 33px; font-size: 12px; }
.layer-name { width: 201px; height: 19px; line-height: 18px; margin-left: 4px; padding-left: 5px; background: #a09fa0; color: #161616; font-weight: 700; }
.layer .w70 { padding-left: 8px; }
.matte { width: 13px; height: 13px; margin: 0 235px 0 5px; background: #3a393b; }
.prop { display: flex; align-items: center; height: 20px; padding: 0 0 2px 43px; gap: 7px; background: #282729; }
.prop span { margin-left: 1px; }
.tl-fill { flex: 1; }
.tl-right { padding-left: 7px; }
.tl-space { height: 29px; }
.navbar { height: 10px; border: solid #000; border-width: 1px 0; background: #68676a; }
.ruler { height: 19px; display: grid; grid-template-columns: repeat(10, 10.608%); font-size: 11px; line-height: 14px; }
.ruler span { width: 40px; margin-left: -20px; text-align: center; color: #a9a8aa; background: linear-gradient(#888, #888) 20px 100% / 1px 5px no-repeat; }
.workarea { height: 16px; border: solid #000; border-width: 1px 0; background: #5f5e61; }
.cache { width: 100%; height: 4px; margin-bottom: 2px; }
.bar { height: 18px; background: linear-gradient(#6d79d6, #5560cc); border-top: 1px solid #b0bcd8; border-bottom: 1px solid #20245c; }
.keys { position: relative; height: 20px; background: #353436; border-bottom: 1px solid #222123; }
.kf { position: absolute; top: 6px; width: 6px; height: 6px; margin-left: -3px; background: #c0bfc1; transform: rotate(45deg); }
.k0 { left: 0; }
.k3 { left: 31.800%; }
.tl-right .tl-fill { background: #333234; }
.brk { position: absolute; left: 1px; width: 6px; background: #3f8fe0; border-radius: 5px 0 0 5px; }
.brk.top { top: 30px; height: 9px; }
.brk.low { top: 59px; height: 15px; }
.playhead { position: absolute; left: calc(7px + (100% - 7px) * .1740); top: 30px; bottom: 0; width: 1px; background: #4f93d4; }
.playhead svg { position: absolute; left: -6px; top: 14px; }
.tl-foot { grid-column: 1 / -1; display: flex; align-items: center; padding: 2px 0 0 711px; background: #242326; }
.tl-foot input { appearance: none; width: 48px; height: 3px; margin: 0 11px; background: #3c3b3d; }
.tl-foot input::-webkit-slider-thumb { appearance: none; width: 10px; height: 10px; border: 2px solid #a9a8aa; border-radius: 50%; background: #242326; }

/* task bar */
.taskbar { position: relative; display: flex; padding-top: 20px; overflow: hidden; }
.wall { position: absolute; inset: 0; width: 100%; height: 100%; }
.edge { position: absolute; inset: 0 0 auto; height: 21px; background: linear-gradient(#17304c 0 2px, #7fb4d8 2px 3px, #0f3458 3px 5px, #c4e4f4 5px 6px, transparent 6px 10px, #d4f0fc 10px 11px, #06213a 11px 12px, rgba(0, 40, 80, .7) 12px 19px, #0a2744 19px 20px, #78b4d4 20px); }
.apps, .tray { position: relative; display: flex; align-items: center; }
.apps { padding-bottom: 1px; }
.red { width: 3px; height: 30px; background: linear-gradient(#3f78c8 50%, #c8403c 50%); margin-right: 20px; border-radius: 0 4px 4px 0; }
.app { width: 58px; height: 38px; display: flex; align-items: center; justify-content: center; margin-right: 4px; padding-bottom: 2px; }
.app.ie { width: 50px; margin: 0 11px 0 0; }
.app.on { border: 1px solid #cfe8f8; border-radius: 3px; background: linear-gradient(135deg, rgba(255, 255, 255, .55), rgba(160, 210, 240, .25)); }
.app.ae-on { background: linear-gradient(135deg, #eef8fc, #9cd0ec); }
.ps, .ae { width: 28px; height: 28px; line-height: 22px; text-align: center; font-size: 15px; font-weight: 600; border: 2px solid #2b9dbc; background: #062434; color: #3cc8e8; }
.ae { width: 30px; border: 3px solid #c8a4ec; background: #220044; color: #c79af0; }
.tray { margin-left: auto; padding: 0 2px 2px 0; gap: 8px; }
.ch { font: 12px/14px "Liberation Serif", serif; color: #fff; margin-bottom: 4px; }
.flower { margin-left: 4px; }

.clock { position: absolute; right: 14px; bottom: 62px; width: 50px; height: 50px; border: 3px solid #d8ecfa; border-radius: 50%; background: linear-gradient(20deg, #58b0e4, #3c80e0); color: #d8f0ff; font-size: 14px; line-height: 44px; text-align: center; }
```
